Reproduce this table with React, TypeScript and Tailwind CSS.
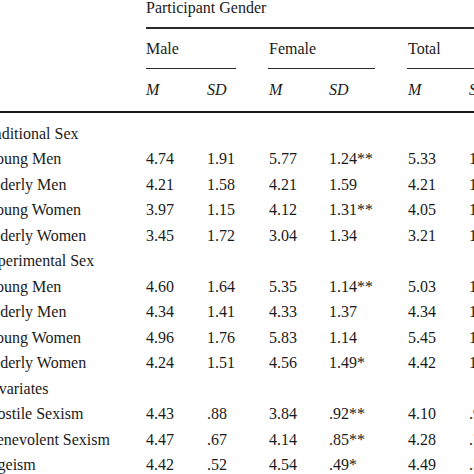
import React from 'react';

type Row = { label: string; sub?: boolean; v?: string[] };

const rows: Row[] = [
  { label: 'Traditional Sex' },
  { label: 'Young Men', sub: true, v: ['4.74', '1.91', '5.77', '1.24**', '5.33', '1.67'] },
  { label: 'Elderly Men', sub: true, v: ['4.21', '1.58', '4.21', '1.59', '4.21', '1.58'] },
  { label: 'Young Women', sub: true, v: ['3.97', '1.15', '4.12', '1.31**', '4.05', '1.24'] },
  { label: 'Elderly Women', sub: true, v: ['3.45', '1.72', '3.04', '1.34', '3.21', '1.51'] },
  { label: 'Experimental Sex' },
  { label: 'Young Men', sub: true, v: ['4.60', '1.64', '5.35', '1.14**', '5.03', '1.44'] },
  { label: 'Elderly Men', sub: true, v: ['4.34', '1.41', '4.33', '1.37', '4.34', '1.38'] },
  { label: 'Young Women', sub: true, v: ['4.96', '1.76', '5.83', '1.14', '5.45', '1.51'] },
  { label: 'Elderly Women', sub: true, v: ['4.24', '1.51', '4.56', '1.49*', '4.42', '1.50'] },
  { label: 'Covariates' },
  { label: 'Hostile Sexism', sub: true, v: ['4.43', '.88', '3.84', '.92**', '4.10', '.94'] },
  { label: 'Benevolent Sexism', sub: true, v: ['4.47', '.67', '4.14', '.85**', '4.28', '.79'] },
  { label: 'Ageism', sub: true, v: ['4.42', '.52', '4.54', '.49*', '4.49', '.51'] },
];

// widths of the six data columns, label column is 166
const cols = ['w-[61px]', 'w-[62px]', 'w-[60px]', 'w-[79px]', 'w-[61px]', 'w-[60px]'];

const App = () => {
  return (
    <div className="w-[474px] h-[474px] overflow-hidden bg-white text-[#1a1a1a] text-[16px] font-['Liberation_Serif','Times_New_Roman',serif]">
      <div className="-ml-[20px] w-[560px]">
        {/* Header */}
        <div className="flex h-[16px] leading-[16px]">
          <div className="w-[166px] shrink-0" />
          <div>Participant Gender</div>
        </div>
        <div className="flex mt-[11px]">
          <div className="w-[166px] shrink-0" />
          <div className="flex-1 h-[1.5px] bg-[#2a2a2a]" />
        </div>
        <div className="flex h-[39px] leading-[39px]">
          <div className="w-[166px] shrink-0" />
          <div className="w-[123px] shrink-0">Male</div>
          <div className="w-[139px] shrink-0">Female</div>
          <div className="w-[121px] shrink-0">Total</div>
        </div>
        <div className="flex h-[2px]">
          <div className="w-[166px] shrink-0" />
          <div className="w-[123px] shrink-0">
            <div className="w-[90px] h-[1.5px] bg-[#2a2a2a]" />
          </div>
          <div className="w-[139px] shrink-0">
            <div className="-ml-[1px] w-[107px] h-[1.5px] bg-[#2a2a2a]" />
          </div>
          <div className="flex-1">
            <div className="-ml-[1px] h-[1.5px] bg-[#2a2a2a]" />
          </div>
        </div>
        <div className="flex h-[40px] leading-[40px] italic">
          <div className="w-[166px] shrink-0" />
          {['M', 'SD', 'M', 'SD', 'M', 'SD'].map((h, i) => (
            <div key={i} className={`${cols[i]} shrink-0`}>
              {h}
            </div>
          ))}
        </div>
        <div className="mt-[1px] h-[2.5px] bg-[#1a1a1a]" />

        {/* Body */}
        <div className="pt-[7.5px]">
          {rows.map((r, i) => (
            <div key={i} className="flex h-[25.5px] leading-[25.5px] whitespace-nowrap">
              <div className={`w-[166px] shrink-0 ${r.sub ? 'pl-[6px]' : ''}`}>{r.label}</div>
              {r.v &&
                r.v.map((v, j) => (
                  <div key={j} className={`${cols[j]} shrink-0`}>
                    {v}
                  </div>
                ))}
            </div>
          ))}
        </div>
      </div>
    </div>
  );
};

export default App;
